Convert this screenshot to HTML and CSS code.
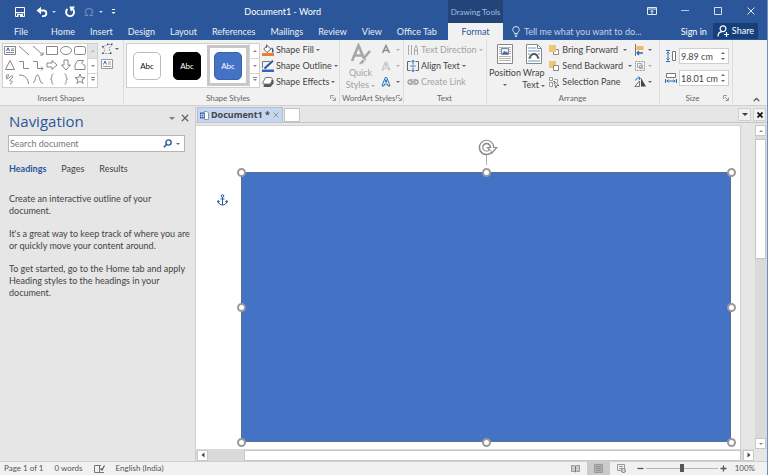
FILE: index.html
```html
<!DOCTYPE html>
<html lang="en">
<head>
  <meta charset="UTF-8">
  <meta name="viewport" content="width=device-width, initial-scale=1.0">
  <title>Document1 - Word</title>
  <link rel="stylesheet" href="styles.css">
</head>
<body>
  <!-- Title bar and ribbon tabs -->
  <header class="header">
    <div class="title-bar">
      <div class="quick-access">
        <button aria-label="Save"><svg width="12" height="12" viewBox="0 0 12 12"><path d="M1.5 1.5h9v9h-9z" fill="none" stroke="#fff"/><path d="M1 6h10v1.200H1zM3 8h6v3H3z" fill="#fff"/><path d="M4.500 9h1.500v2H4.500z" fill="#2b579a"/></svg></button>
        <button class="undo" aria-label="Undo"><svg width="12" height="12" viewBox="0 0 12 12"><path d="M2 4.500h5.500a2.800 2.800 0 0 1 0 5.700H6" fill="none" stroke="#fff" stroke-width="1.800"/><path d="M0.500 4.500L5 0.800v7.400z" fill="#fff"/></svg><span class="caret"></span></button>
        <button class="redo" aria-label="Repeat"><svg width="12" height="12" viewBox="0 0 12 12"><path d="M8.600 3A4 4 0 1 1 3.500 3" fill="none" stroke="#fff" stroke-width="1.900"/><path d="M5.500 0.500h5.500L7 5.800z" fill="#fff"/></svg></button>
        <button class="symbol" aria-label="Symbol"><span class="omega">Ω</span><span class="caret"></span></button>
        <button aria-label="Customize"><svg width="5" height="6" viewBox="0 0 5 6"><path d="M1 0h3v1H1zM.5 3h4l-2 2z" fill="#fff"/></svg></button>
      </div>
      <span class="doc-title">Document1 - Word</span>
    </div>
    <div class="tool-context">Drawing Tools</div>
    <div class="window-controls">
      <button aria-label="Ribbon display options"><svg width="10" height="10" viewBox="0 0 10 10"><path d="M0.500 1.500h9v7h-9zM0.500 3h9M5 8V4.500M3.500 6L5 4.500 6.500 6" fill="none" stroke="#e4eaf4"/></svg></button>
      <button aria-label="Minimize"><svg width="8" height="8" viewBox="0 0 8 8"><path d="M0 3.500h8" stroke="#b9c9e2"/></svg></button>
      <button aria-label="Maximize"><svg width="8" height="8" viewBox="0 0 8 8"><path d="M0.500 0.500h7v7h-7z" fill="none" stroke="#d5deed"/></svg></button>
      <button aria-label="Close"><svg width="8" height="8" viewBox="0 0 8 8"><path d="M0.500 0.500l7 7M7.500 0.500l-7 7" stroke="#e4eaf4"/></svg></button>
    </div>
    <nav class="tabs">
      <a class="file" href="#">File</a>
      <a href="#">Home</a>
      <a href="#">Insert</a>
      <a href="#">Design</a>
      <a href="#">Layout</a>
      <a href="#">References</a>
      <a href="#">Mailings</a>
      <a href="#">Review</a>
      <a href="#">View</a>
      <a href="#">Office Tab</a>
    </nav>
    <a class="tab-active" href="#">Format</a>
    <div class="tab-right">
      <button class="tell-me"><svg width="8" height="11" viewBox="0 0 8 11"><path d="M2.500 7.500C2.500 6 0.700 5.500 0.700 3.700a3.300 3.200 0 0 1 6.600 0C7.300 5.500 5.500 6 5.500 7.500zM2.500 9h3M3 10.500h2" fill="none" stroke="#d5deed"/></svg>Tell me what you want to do...</button>
      <a class="sign-in" href="#">Sign in</a>
      <button class="share"><svg width="12" height="12" viewBox="0 0 12 12"><circle cx="6" cy="3.800" r="2.900" fill="none" stroke="#fff" stroke-width="1.200"/><path d="M1 11.500c0-2.800 1.500-4.500 4-4.800M7 9.500h5M9.500 7v5" fill="none" stroke="#fff" stroke-width="1.200"/></svg>Share</button>
    </div>
  </header>

  <!-- Ribbon -->
  <section class="ribbon">
    <div class="group insert-shapes">
      <div class="group-body">
        <div class="gallery">
          <div class="shape-grid">
            <button aria-label="Text box"><svg viewBox="0 0 12 12"><path d="M0.500 1.500h11v8H.5zM7 4h3M7 5.500h3M2 7.500h8" /><path d="M2.500 6L4 2.800 5.500 6" stroke="#2b579a"/></svg></button>
            <button aria-label="Line"><svg viewBox="0 0 12 12"><path d="M1 1l10 9"/></svg></button>
            <button aria-label="Arrow"><svg viewBox="0 0 12 12"><path d="M1 1l10 9M11 7v3H8"/></svg></button>
            <button aria-label="Rectangle"><svg viewBox="0 0 12 12"><path d="M.5 1.500h11v8H.5z"/></svg></button>
            <button aria-label="Oval"><svg viewBox="0 0 12 12"><ellipse cx="6" cy="5.500" rx="5.500" ry="4"/></svg></button>
            <button aria-label="Rounded rectangle"><svg viewBox="0 0 12 12"><rect x=".5" y="1.500" width="11" height="8" rx="2"/></svg></button>
            <button aria-label="Triangle"><svg viewBox="0 0 12 12"><path d="M6 1.500L10.500 10.500h-9z"/></svg></button>
            <button aria-label="Elbow connector"><svg viewBox="0 0 12 12"><path d="M1 2.500h4.500v7H11"/></svg></button>
            <button aria-label="Elbow arrow"><svg viewBox="0 0 12 12"><path d="M1 2.500h4.500v7H11M9 7.500l2 2-2 2"/></svg></button>
            <button aria-label="Right arrow"><svg viewBox="0 0 12 12"><path d="M1 4h5V1.500L11 6l-5 4.500V8H1z"/></svg></button>
            <button aria-label="Down arrow"><svg viewBox="0 0 12 12"><path d="M4 1v5H1.500L6 11l4.500-5H8V1z"/></svg></button>
            <button aria-label="Freeform"><svg viewBox="0 0 12 12"><path d="M3.500 1.500h6L7.500 4 9 5.500l2 1V10.500H1V6z"/></svg></button>
            <button aria-label="Scribble"><svg viewBox="0 0 12 12"><path d="M2 3c2-3 4-1 1.500 1S3 7 6 4s4 0 1 2-1 2 .5 2S8 11 6 11M2 3l1 2"/></svg></button>
            <button aria-label="Arc"><svg viewBox="0 0 12 12"><path d="M1 2c6 0 9 3 9.500 9"/></svg></button>
            <button aria-label="Curve"><svg viewBox="0 0 12 12"><path d="M1 9.500C4 9 3 2 5.500 2S7 10 11 10.500"/></svg></button>
            <button aria-label="Left brace"><svg viewBox="0 0 12 12"><path d="M7.500 1C4.500 1 7 5.500 4.500 6 7 6.500 4.500 11 7.500 11"/></svg></button>
            <button aria-label="Right brace"><svg viewBox="0 0 12 12"><path d="M4.500 1c3 0 .5 4.500 3 5-2.500.5 0 5-3 5"/></svg></button>
            <button aria-label="Star"><svg viewBox="0 0 12 12"><path d="M6 1l1.300 3.600h3.700L8 6.800 9.200 10.500 6 8.200 2.800 10.500 4 6.800 1 4.600h3.700z"/></svg></button>
          </div>
          <div class="spinner">
            <button class="off" aria-label="Scroll up"><i class="up"></i></button>
            <button aria-label="Scroll down"><i class="caret"></i></button>
            <button aria-label="More shapes"><i class="caret more"></i></button>
          </div>
        </div>
        <div class="side-tools">
          <button aria-label="Edit shape"><svg width="12" height="12" viewBox="0 0 12 12"><path d="M2 3.500L7 1.500h4L8 5.500l2 5H2L4 7z" fill="none" stroke="#999" stroke-dasharray="2 1"/><path d="M1 3h1.500v1.500H1zM6 .5h1.500V2H6zM10 .5h1.500V2H10zM1 9.500h1.500V11H1zM9 9.500h1.500V11H9z" fill="#2b579a"/></svg><span class="caret"></span></button>
          <button aria-label="Draw text box"><svg width="12" height="12" viewBox="0 0 12 12"><path d="M.5 1.500h11v9H.5zM7 4h3M7 6h3M2 8.500h8" fill="#fff" stroke="#999"/><path d="M2.500 6.500L4 3l1.500 3.500" fill="none" stroke="#2b6cb8"/></svg></button>
        </div>
      </div>
      <div class="caption"><span>Insert Shapes</span></div>
    </div>

    <div class="group shape-styles">
      <div class="group-body">
        <div class="gallery">
          <div class="style-tiles">
            <button class="tile"><span class="swatch outline">Abc</span></button>
            <button class="tile"><span class="swatch black">Abc</span></button>
            <button class="tile selected"><span class="swatch blue">Abc</span></button>
          </div>
          <div class="spinner">
            <button aria-label="Previous styles"><i class="up"></i></button>
            <button aria-label="Next styles"><i class="caret"></i></button>
            <button aria-label="More styles"><i class="caret more"></i></button>
          </div>
        </div>
        <div class="commands">
          <button><svg width="12" height="12" viewBox="0 0 12 12"><path d="M0 9h12v3H0z" fill="#ed7d31"/><path d="M5 1.500l4 3.500-4 3.500L1.800 5zM4.500 4V.5" fill="#fff" stroke="#666"/><path d="M9.500 4c1.500 1 1.500 3 1 4.500" fill="none" stroke="#2b579a" stroke-width="1.500"/></svg>Shape Fill<span class="caret"></span></button>
          <button><svg width="12" height="12" viewBox="0 0 12 12"><path d="M0 9.500h12V12H0z" fill="#3566bd"/><path d="M.5 8V1.500H8" fill="none" stroke="#777"/><path d="M2.500 8.500L11 .8" stroke="#2b579a" stroke-width="2"/></svg>Shape Outline<span class="caret"></span></button>
          <button><svg width="12" height="12" viewBox="0 0 12 12"><path d="M3 4h8.500v3.500L8.500 11H1.500z" fill="#555"/><path d="M3.500 1.500H9l1.500 1.200L8.500 8H1L.8 6.800z" fill="#fff" stroke="#777"/></svg>Shape Effects<span class="caret"></span></button>
        </div>
      </div>
      <div class="caption"><span>Shape Styles</span><svg class="launcher" viewBox="0 0 6 6"><path d="M.5 4V.5H4M2 2l3 3M5.500 2.500v3h-3"/></svg></div>
    </div>

    <div class="group wordart disabled">
      <div class="group-body">
        <button class="large"><svg width="22" height="24" viewBox="0 0 22 24"><path d="M2 18L8.500 2.500 15 18M4.500 12.500h8" fill="none" stroke="#a6a6a6" stroke-width="2.600"/><path d="M20 8l-6 7" stroke="#a6a6a6" stroke-width="2.500"/><path d="M8 21c2 0 2-4 5-5l2 2c-1 3-4 4-7 3z" fill="#a6a6a6" stroke="#f1f1f1"/></svg><span>Quick</span><span>Styles<i class="caret"></i></span></button>
        <div class="commands">
          <button aria-label="Text fill"><svg width="10" height="12" viewBox="0 0 10 12"><path d="M1.500 9L5 1.500 8.500 9M3 6.500h4" fill="none" stroke="#8d8d8d" stroke-width="1.500"/></svg><span class="caret"></span></button>
          <button aria-label="Text outline"><svg width="10" height="12" viewBox="0 0 10 12"><path d="M1 10L4.200 2h1.600L9 10H7.500L7 8H3l-.5 2zM4 6h2L5 3.500z" fill="none" stroke="#b5b5b5" stroke-width=".8"/></svg><span class="caret"></span></button>
          <button class="enabled" aria-label="Text effects"><svg width="10" height="12" viewBox="0 0 10 12"><path d="M1 10L4.200 1.500h1.600L9 10H7L6.500 8h-3L3 10zM4 6h2L5 3.500z" fill="#fff" stroke="#2b6cb8"/></svg><span class="caret"></span></button>
        </div>
      </div>
      <div class="caption"><span>WordArt Styles</span><svg class="launcher" viewBox="0 0 6 6"><path d="M.5 4V.5H4M2 2l3 3M5.500 2.500v3h-3"/></svg></div>
    </div>

    <div class="group text">
      <div class="group-body">
        <div class="commands">
          <button disabled><svg width="12" height="12" viewBox="0 0 12 12"><path d="M1.500 1v10M4.500 1v10M7.500 11V5l1.500-3.500L10.500 5v6M7.500 6.500h3" fill="none" stroke="#aaa"/></svg>Text Direction<span class="caret"></span></button>
          <button><svg width="12" height="12" viewBox="0 0 12 12"><path d="M3.500 1.500h-3v9h3M8.500 1.500h3v9h-3" fill="none" stroke="#666"/><path d="M6 0v4.500M6 7.500V12M4.500 2L6 .5 7.500 2M4.500 10L6 11.500 7.500 10M3.500 6h5" fill="none" stroke="#2b6cb8"/></svg>Align Text<span class="caret"></span></button>
          <button disabled><svg width="12" height="12" viewBox="0 0 12 12"><path d="M5.500 4H3a2 2 0 0 0 0 4h2.500M6.500 4H9a2 2 0 0 1 0 4H6.500M3.500 6h5" fill="none" stroke="#999" stroke-width="1.300"/></svg>Create Link</button>
        </div>
      </div>
      <div class="caption"><span>Text</span></div>
    </div>

    <div class="group arrange">
      <div class="group-body">
        <button class="large position"><svg width="18" height="24" viewBox="0 0 18 24"><path d="M1.500 1.500h15v19h-15z" fill="#fff" stroke="#888"/><path d="M3 4.500h12M3 6.500h2M13 6.500h2M3 8.500h2M13 8.500h2M3 10.500h2M13 10.500h2M3 13.500h12M3 15.500h12M3 17.500h12" stroke="#b5b5b5"/><path d="M5.500 5.500h7v6h-7z" fill="#e3eefa" stroke="#888"/><path d="M6 11l2.500-3 1.500 1.500 1-1L12.500 11z" fill="#2b6cb8"/></svg><span>Position</span><i class="caret"></i></button>
        <button class="large wrap"><svg width="18" height="24" viewBox="0 0 18 24"><path d="M1.500 1.500h11l4 4v15h-15z" fill="#fff" stroke="#888"/><path d="M12.500 1.500v4h4" fill="none" stroke="#888"/><path d="M3 5h8M3 8h12M3 11h2M13 11h2M3 15h2M13 15h2M3 18h12" stroke="#6c9bd2"/><path d="M5 15.500c0-6 8-6 8 0" fill="none" stroke="#555" stroke-width="2"/></svg><span>Wrap</span><span>Text<i class="caret"></i></span></button>
        <div class="commands">
          <button><svg width="12" height="12" viewBox="0 0 12 12"><path d="M5.500 5.500h5v5h-5z" fill="#fff" stroke="#888"/><path d="M1 1h7v7H1z" fill="#f0c674"/></svg>Bring Forward<span class="caret wide"></span></button>
          <button><svg width="12" height="12" viewBox="0 0 12 12"><path d="M1 1h7v7H1z" fill="#f0c674"/><path d="M5.500 5.500h5v5h-5z" fill="#fff" stroke="#888"/></svg>Send Backward<span class="caret wide"></span></button>
          <button><svg width="12" height="12" viewBox="0 0 12 12"><path d="M1.500 1.500h3v3h-3zM1.500 6.500h3v4h-3zM6.500 3.500h3v3" fill="#fff" stroke="#999"/><path d="M6 5l5 4.500H8.800L7.800 12z" fill="#fff" stroke="#555" stroke-width=".8"/></svg>Selection Pane</button>
        </div>
        <div class="commands align-tools">
          <button aria-label="Align"><svg width="12" height="12" viewBox="0 0 12 12"><path d="M1.500 0v12" stroke="#777"/><path d="M2.500 2h7v4h-7z" fill="#f0b95b"/><path d="M3 9h6M5 7L3 9l2 2" fill="none" stroke="#2b6cb8" stroke-width="1.300"/></svg><span class="caret"></span></button>
          <button disabled aria-label="Group"><svg width="12" height="12" viewBox="0 0 12 12"><path d="M1.500 1.500h9v9h-9z" fill="none" stroke="#999" stroke-dasharray="2 1"/><path d="M3.500 3.500h4v4h-4zM5.500 5.500h3v3h-3z" fill="none" stroke="#aaa"/></svg><span class="caret"></span></button>
          <button aria-label="Rotate"><svg width="12" height="12" viewBox="0 0 12 12"><path d="M7 2v8.500h5z" fill="#444"/><path d="M5.500 5v5.500H.8z" fill="none" stroke="#777"/><path d="M1.500 4.500C2 2 4 1.500 6 2.500M4.500 .5L6.500 2.500l-2 1.500" fill="none" stroke="#2b6cb8"/></svg><span class="caret"></span></button>
        </div>
      </div>
      <div class="caption"><span>Arrange</span></div>
    </div>

    <div class="group size">
      <div class="group-body">
        <label class="size-field"><svg width="12" height="12" viewBox="0 0 12 12"><path d="M7.500 1.500h3v9h-3z" fill="#fff" stroke="#777"/><path d="M1 .5h4M1 11.500h4M3 1.500v9M1.500 3.500L3 2l1.500 1.500M1.500 8.500L3 10l1.500-1.500" fill="none" stroke="#2b6cb8"/></svg><input type="text" value="9.89 cm" aria-label="Shape height"><span class="arrows"><i class="up"></i><i class="caret"></i></span></label>
        <label class="size-field"><svg width="12" height="12" viewBox="0 0 12 12"><path d="M1.500 1.500h9v4h-9z" fill="#fff" stroke="#777"/><path d="M.5 7v4M11.500 7v4M1.500 9h9M3.500 7.500L2 9l1.500 1.500M8.500 7.500L10 9l-1.500 1.500" fill="none" stroke="#2b6cb8"/></svg><input type="text" value="18.01 cm" aria-label="Shape width"><span class="arrows"><i class="up"></i><i class="caret"></i></span></label>
      </div>
      <div class="caption"><span>Size</span><svg class="launcher" viewBox="0 0 6 6"><path d="M.5 4V.5H4M2 2l3 3M5.500 2.500v3h-3"/></svg></div>
    </div>
    <button class="collapse" aria-label="Collapse the ribbon"><svg width="7" height="5" viewBox="0 0 7 5"><path d="M.8 4L3.500 1.300 6.200 4" fill="none" stroke="#555" stroke-width="1.300"/></svg></button>
  </section>

  <main class="workspace">
    <!-- Navigation pane -->
    <aside class="nav-pane">
      <div class="nav-head">
        <h1>Navigation</h1>
        <button aria-label="Pane options"><span class="caret large-caret"></span></button>
        <button aria-label="Close pane"><svg width="8" height="8" viewBox="0 0 8 8"><path d="M.8.8l6.400 6.400M7.200.8L.8 7.200" stroke="#666" stroke-width="1.300"/></svg></button>
      </div>
      <div class="search">
        <input type="text" placeholder="Search document" aria-label="Search document">
        <button aria-label="Search"><svg width="9" height="9" viewBox="0 0 9 9"><circle cx="5.500" cy="3.500" r="2.600" fill="none" stroke="#2b579a" stroke-width="1.400"/><path d="M3.500 5.500L.8 8.200" stroke="#2b579a" stroke-width="1.600"/></svg></button>
        <button aria-label="Search options"><span class="caret"></span></button>
      </div>
      <div class="nav-tabs">
        <a class="current" href="#">Headings</a>
        <a href="#">Pages</a>
        <a href="#">Results</a>
      </div>
      <div class="nav-text">
        <p>Create an interactive outline of your<br>document.</p>
        <p>It's a great way to keep track of where you are<br>or quickly move your content around.</p>
        <p>To get started, go to the Home tab and apply<br>Heading styles to the headings in your<br>document.</p>
      </div>
    </aside>

    <!-- Document window -->
    <section class="document">
      <div class="doc-tabs">
        <a class="doc-tab" href="#"><svg width="9" height="9" viewBox="0 0 9 9"><path d="M4 .5h3L8.500 2v6.500H4" fill="#fff" stroke="#8a9ab5"/><path d="M0 1.500h5v6H0z" fill="#2b5fae"/><path d="M1.200 3.200h2.600v2.600H1.200z" fill="none" stroke="#fff" stroke-width=".8"/></svg>Document1 *<svg class="tab-close" width="6" height="6" viewBox="0 0 6 6"><path d="M.5.5l5 5M5.500.5l-5 5" stroke="#999"/></svg></a>
        <button class="new-tab" aria-label="New tab"></button>
        <button class="strip-button push" aria-label="Tab list"><span class="caret large-caret dark"></span></button>
        <button class="strip-button" aria-label="Close document"><svg width="6" height="6" viewBox="0 0 6 6"><path d="M.5.5l5 5M5.500.5l-5 5" stroke="#111" stroke-width="1.700"/></svg></button>
      </div>
      <div class="canvas">
        <div class="page">
          <svg class="anchor" width="11" height="12" viewBox="0 0 11 12"><circle cx="5.500" cy="2" r="1.300" fill="none" stroke="#2b579a"/><path d="M5.500 3.500v7.500M3.500 5h4M1 7c.5 3 2.500 4 4.500 4s4-1 4.500-4M.5 8.500L1 6.500l1.800 1.200M10.500 8.500L10 6.500 8.200 7.700" fill="none" stroke="#2b579a"/></svg>
          <div class="drawn-shape">
            <svg class="rotate" width="20" height="26" viewBox="0 0 20 26"><path d="M8.500 16v10" stroke="#b5b5b5"/><path d="M12.600 12.200A5.500 5.500 0 1 1 14 8.500" fill="none" stroke="#8b8b8b" stroke-width="4.600"/><path d="M9.500 8.500h9.300L14 14z" fill="#fff" stroke="#8b8b8b" stroke-width="1.200"/><path d="M12.500 12A5.500 5.500 0 1 1 14 9" fill="none" stroke="#fff" stroke-width="2"/></svg>
            <span class="handle nw"></span><span class="handle n"></span><span class="handle ne"></span>
            <span class="handle w"></span><span class="handle e"></span>
            <span class="handle sw"></span><span class="handle s"></span><span class="handle se"></span>
          </div>
        </div>
        <div class="v-scroll">
          <button aria-label="Scroll up"><i class="up"></i></button>
          <div class="v-thumb"></div>
          <button class="down" aria-label="Scroll down"><i class="caret"></i></button>
        </div>
      </div>
      <div class="h-scroll">
        <button aria-label="Scroll left"><svg width="4" height="6" viewBox="0 0 4 6"><path d="M3.500.5v5L.5 3z" fill="#444"/></svg></button>
        <div class="h-thumb"></div>
        <button aria-label="Scroll right"><svg width="4" height="6" viewBox="0 0 4 6"><path d="M.5.5v5l3-2.500z" fill="#444"/></svg></button>
      </div>
    </section>
  </main>

  <!-- Status bar -->
  <footer class="status">
    <span>Page 1 of 1</span>
    <span>0 words</span>
    <svg width="11" height="10" viewBox="0 0 11 10"><path d="M5 1.500H.5v7H5l.5.500.5-.5h4M5.500 2v7M5 1.500h2" fill="none" stroke="#777"/><path d="M6.500 4.500L8 6l2.500-4.500" fill="none" stroke="#555" stroke-width="1.200"/></svg>
    <span>English (India)</span>
    <div class="views">
      <button aria-label="Read mode"><svg width="9" height="9" viewBox="0 0 9 9"><path d="M.5 1.500h3l1 .5 1-.5h3v6h-3l-1 .5-1-.5h-3z" fill="#c8ccd2" stroke="#999"/><path d="M4.500 2v6" stroke="#777"/></svg></button>
      <button class="on" aria-label="Print layout"><svg width="9" height="9" viewBox="0 0 9 9"><path d="M.5.5h8v8h-8z" fill="#b5b5b5" stroke="#999"/><path d="M2 2.500h5M2 4.500h5M2 6.500h5" stroke="#8a8a8a"/></svg></button>
      <button aria-label="Web layout"><svg width="9" height="9" viewBox="0 0 9 9"><path d="M.5.500h7v4M.5.5v6H4M2 2.500h4M2 4.500h3" fill="none" stroke="#999"/><circle cx="6.500" cy="6.500" r="2" fill="#ddd" stroke="#777"/></svg></button>
    </div>
    <div class="zoom">
      <button aria-label="Zoom out"><svg width="7" height="7" viewBox="0 0 7 7"><path d="M.5 3.500h6" stroke="#555" stroke-width="1.300"/></svg></button>
      <input type="range" min="0" max="200" value="100" aria-label="Zoom">
      <button aria-label="Zoom in"><svg width="7" height="7" viewBox="0 0 7 7"><path d="M.5 3.500h6M3.500.5v6" stroke="#555" stroke-width="1.300"/></svg></button>
    </div>
    <span class="zoom-value">100%</span>
  </footer>
</body>
</html>
```
FILE: styles.css
```css
/* Global */
* {
  box-sizing: border-box;
}

body {
  margin: 0;
  min-height: 100vh;
  display: flex;
  flex-direction: column;
  font-family: Lato, "Open Sans", sans-serif;
  font-size: 9px;
  line-height: 12px;
  color: #444;
  background-color: #e6e6e6;
  border-right: 1px solid #6d8fc4;
}

button {
  display: flex;
  align-items: center;
  justify-content: center;
  padding: 0;
  border: none;
  background: none;
  font: inherit;
  color: inherit;
  white-space: nowrap;
}

a {
  color: inherit;
  text-decoration: none;
  white-space: nowrap;
}

input {
  font: inherit;
  color: inherit;
  min-width: 0;
}

svg {
  flex: none;
}

.caret,
.up {
  flex: none;
  display: inline-block;
  border: 2px solid transparent;
  border-top-color: currentColor;
  border-bottom-width: 0;
  opacity: 0.8;
}

.up {
  border-top-width: 0;
  border-bottom: 2px solid currentColor;
}

.more {
  position: relative;
}

.more::before {
  content: "";
  position: absolute;
  left: -2px;
  top: -4px;
  width: 4px;
  height: 1px;
  background-color: currentColor;
}

.large-caret {
  border-width: 3px 3px 0;
}

.dark {
  color: #111;
}

/* Header */
.header {
  display: grid;
  grid-template-columns: 448px 55px 1fr;
  grid-template-rows: 23px 17px;
  background-color: #2b579a;
  color: #fff;
}

.title-bar {
  display: flex;
  align-items: center;
}

.quick-access {
  display: flex;
  align-items: center;
  gap: 8px;
  padding-left: 14px;
}

.quick-access .undo {
  margin-left: 2px;
  gap: 4px;
}

.quick-access .symbol {
  gap: 5px;
}

.omega {
  font-size: 12px;
  color: #6c8bbd;
}

.doc-title {
  margin-left: auto;
  padding-right: 127px;
}

.tool-context {
  display: flex;
  align-items: center;
  justify-content: center;
  background-color: #234478;
  color: #a3bbe0;
  font-size: 8px;
  white-space: nowrap;
}

.window-controls {
  display: flex;
  justify-content: flex-end;
}

.window-controls button {
  width: 33px;
  height: 21px;
}

.tabs {
  display: flex;
  align-items: center;
  color: #e9eef6;
}

.tabs a {
  padding: 0 8px 0 7px;
}

.tabs .file {
  padding: 0 16px 0 14px;
}

.tab-active {
  background-color: #f1f1f1;
  color: #2b579a;
  text-align: center;
  line-height: 17px;
}

.tab-right {
  display: flex;
  align-items: center;
  padding: 0 9px 0 9px;
}

.tell-me {
  gap: 4px;
  color: #c5d2e7;
}

.sign-in {
  margin-left: auto;
  padding-right: 6px;
}

.share {
  align-self: stretch;
  gap: 3px;
  padding: 0 4px;
  margin-bottom: 1px;
  background-color: #173f7a;
}

/* Ribbon */
.ribbon {
  display: flex;
  padding-bottom: 1px;
  background-color: #f1f1f1;
  border-bottom: 1px solid #d0d0d0;
}

.group {
  display: flex;
  flex-direction: column;
  padding: 3px 3px 0 2px;
  border-right: 1px solid #dcdcdc;
}

.group-body {
  display: flex;
  height: 49px;
}

.caption {
  display: flex;
  align-items: center;
  font-size: 8px;
  line-height: 12px;
  color: #666;
  white-space: nowrap;
}

.caption span {
  flex: 1;
  text-align: center;
}

.launcher {
  width: 6px;
  height: 6px;
  fill: none;
  stroke: #999;
}

.gallery {
  display: flex;
  height: 45px;
  background-color: #fff;
  border: 1px solid #cfcfcf;
}

.spinner {
  display: grid;
  grid-template-rows: repeat(3, 1fr);
  width: 10px;
  border-left: 1px solid #d4d4d4;
  color: #666;
}

.spinner button + button {
  border-top: 1px solid #d4d4d4;
}

.spinner .off {
  background-color: #e3e3e3;
  color: #aaa;
}

.insert-shapes {
  width: 124px;
}

.shape-grid {
  display: grid;
  grid-template-columns: repeat(6, 14px);
  grid-template-rows: repeat(3, 14px);
}

.shape-grid svg {
  width: 12px;
  height: 12px;
  fill: none;
  stroke: #888;
}

.side-tools {
  display: flex;
  flex-direction: column;
  align-items: flex-start;
  gap: 3px;
  padding-left: 3px;
}

.side-tools button {
  gap: 2px;
}

.shape-styles {
  width: 216px;
}

.style-tiles {
  display: flex;
  align-items: center;
}

.tile {
  width: 40px;
  height: 41px;
}

.tile.selected {
  width: 42px;
  border: 3px solid #c8c8c8;
}

.swatch {
  width: 28px;
  height: 28px;
  border-radius: 5px;
  font-size: 8px;
  line-height: 26px;
  border: 1px solid #000;
}

.outline {
  border-color: #bbb;
  color: #111;
}

.black {
  background-color: #000;
  color: #fff;
}

.blue {
  background-color: #4472c4;
  border-color: #3a62aa;
  color: #fff;
}

.commands {
  display: grid;
  grid-template-rows: repeat(3, 16px);
  justify-items: start;
  margin-top: -1px;
  padding-left: 2px;
}

.commands button {
  gap: 2px;
}

.commands button:disabled,
.disabled {
  color: #a3a3a3;
}

.enabled {
  color: #444;
}

.large {
  flex-direction: column;
  justify-content: flex-start;
  width: 31px;
}

.large span {
  line-height: 12px;
}

.large .caret {
  margin: 3px 0 1px 2px;
}

.wordart {
  width: 64px;
}

.wordart .large {
  width: 38px;
}

.wordart .commands button {
  gap: 5px;
}

.text {
  width: 83px;
}

.text .commands {
  padding-left: 1px;
}

.arrange {
  width: 173px;
}

.position {
  width: 35px;
}

.position .caret {
  margin: 5px 0 0;
}

.wrap {
  width: 28px;
}

.commands .wide {
  margin-left: 3px;
}

.align-tools {
  margin-left: auto;
  padding-right: 4px;
}

.size {
  width: 73px;
}

.size .group-body {
  flex-direction: column;
  gap: 6px;
  padding: 5px 0 0 3px;
}

.size-field {
  display: flex;
  align-items: center;
  gap: 2px;
  position: relative;
}

.size-field input {
  flex: 1;
  height: 16px;
  padding: 0 1px;
  border: 1px solid #d0d0d0;
  background-color: #fff;
}

.arrows {
  position: absolute;
  right: 4px;
  top: 4px;
  display: flex;
  flex-direction: column;
  gap: 4px;
}

.collapse {
  margin: auto 7px 2px auto;
}

/* Workspace */
.workspace {
  flex: 1;
  display: flex;
}

.nav-pane {
  width: 196px;
  padding: 4px 6px 0 9px;
  border-right: 1px solid #cfcfcf;
}

.nav-head {
  display: flex;
  align-items: center;
  gap: 6px;
  color: #666;
}

.nav-head h1 {
  margin: 0 auto 0 0;
  font-family: "Open Sans", sans-serif;
  font-size: 15px;
  line-height: 22px;
  font-weight: 400;
  color: #2b579a;
}

.nav-head button {
  height: 12px;
  margin-bottom: 6px;
}

.search {
  display: flex;
  margin: 3px 4px 0 -1px;
  height: 17px;
  border: 1px solid #b5b5b5;
  background-color: #fff;
}

.search input {
  flex: 1;
  padding: 0 1px;
  border: none;
  background: none;
}

.search input::placeholder {
  color: #777;
  opacity: 1;
}

.search button {
  padding-right: 4px;
}

.nav-tabs {
  display: flex;
  gap: 15px;
  padding-top: 11px;
}

.nav-tabs .current {
  font-weight: 700;
  color: #2b579a;
}

.nav-text p {
  margin: 0;
  white-space: nowrap;
  line-height: 12px;
}

.nav-text {
  display: flex;
  flex-direction: column;
  gap: 11px;
  padding-top: 18px;
}

.document {
  flex: 1;
  display: flex;
  flex-direction: column;
}

.doc-tabs {
  display: flex;
  align-items: center;
  height: 17px;
  padding: 1px 1px 0 1px;
  border-bottom: 1px solid #c4c4c4;
}

.doc-tab {
  display: flex;
  align-items: center;
  align-self: stretch;
  gap: 2px;
  padding: 0 3px 0 2px;
  background-color: #c5d6f0;
  border: 1px solid #b3bfd2;
  border-bottom: none;
  font-family: "Noto Sans", sans-serif;
  font-weight: 700;
}

.tab-close {
  margin-left: 1px;
}

.new-tab {
  width: 16px;
  height: 14px;
  margin-left: 1px;
  background-color: #fff;
  border: 1px solid #c4c4c4;
}

.strip-button {
  width: 13px;
  height: 13px;
  background-color: #f1f1f1;
  border: 1px solid #d0d0d0;
}

.push {
  margin-left: auto;
  margin-right: 2px;
}

.canvas {
  flex: 1;
  display: flex;
  padding-top: 2px;
}

.page {
  flex: 1;
  display: flex;
  padding: 46px 9px 7px 21px;
  background-color: #fff;
  border-top: 1px solid #d4d4d4;
  border-right: 1px solid #cfcfcf;
}

.anchor {
  margin: 22px 13px 0 0;
}

.drawn-shape {
  flex: 1;
  position: relative;
  background-color: #4472c4;
  outline: 1px solid #5b6f93;
  outline-offset: -1px;
}

.rotate {
  position: absolute;
  left: calc(50% - 8px);
  top: -33px;
}

/* Selection handles sit on the shape's outline */
.handle {
  position: absolute;
  width: 9px;
  height: 9px;
  margin: -4px;
  border: 2px solid #9a9a9a;
  border-radius: 50%;
  background-color: #fff;
}

.nw, .n, .ne { top: 0; }
.w, .e { top: 50%; }
.sw, .s, .se { top: 100%; }
.nw, .w, .sw { left: 0; }
.n, .s { left: 50%; }
.ne, .e, .se { left: 100%; }

/* Scroll bars */
.v-scroll {
  display: flex;
  flex-direction: column;
  width: 12px;
  margin-left: 14px;
  background-color: #dadada;
  color: #666;
}

.v-scroll button,
.h-scroll button {
  width: 11px;
  height: 11px;
  background-color: #fff;
  border: 1px solid #c8c8c8;
}

.v-thumb {
  height: 120px;
  margin: 3px 1px 0 0;
  background-color: #fff;
  border: 1px solid #c4c4c4;
}

.v-scroll .down {
  margin-top: auto;
}

.h-scroll {
  display: flex;
  align-items: center;
  height: 12px;
  padding-left: 1px;
  margin-right: 13px;
  background-color: #dadada;
}

.h-thumb {
  flex: 1;
  height: 11px;
  margin: 0 2px 0 36px;
  background-color: #fff;
  border: 1px solid #c8c8c8;
}

/* Status bar */
.status {
  display: flex;
  align-items: center;
  height: 14px;
  gap: 11px;
  padding-left: 4px;
  border-top: 1px solid #cfcfcf;
  background-color: #f1f1f1;
  font-size: 8px;
  line-height: 13px;
  color: #555;
}

.views {
  display: flex;
  align-self: stretch;
  margin-left: auto;
}

.views button {
  width: 23px;
}

.views .on {
  background-color: #cbcbcb;
}

.zoom {
  display: flex;
  align-items: center;
  gap: 2px;
  margin: 0 -3px 0 -7px;
}

.zoom input {
  width: 72px;
  height: 12px;
  margin: 0;
  appearance: none;
  background: none;
}

.zoom input::-webkit-slider-runnable-track {
  height: 1px;
  background-color: #b5b5b5;
}

.zoom input::-webkit-slider-thumb {
  appearance: none;
  width: 4px;
  height: 8px;
  margin-top: -4px;
  background-color: #555;
}

.zoom-value {
  padding-right: 12px;
}
```
